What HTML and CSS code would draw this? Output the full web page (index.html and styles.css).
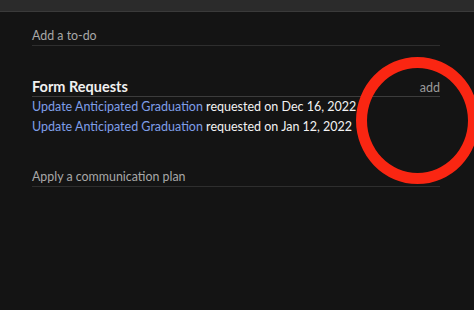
FILE: index.html
```html
<!DOCTYPE html>
<html lang="en">
<head>
    <meta charset="utf-8">
    <title>Form Requests</title>
    <link rel="stylesheet" href="styles.css">
</head>
<body>
    <div class="topbar"></div>

    <div class="content">
        <div class="section todo">
            <div class="section-line">Add a to-do</div>
        </div>

        <div class="section requests">
            <div class="section-head">
                <span class="title">Form Requests</span>
                <span class="add">add</span>
            </div>
            <div class="request">
                <a href="#" class="request-link">Update Anticipated Graduation</a> requested on Dec 16, 2022
            </div>
            <div class="request">
                <a href="#" class="request-link">Update Anticipated Graduation</a> requested on Jan 12, 2022
            </div>
        </div>

        <div class="section plan">
            <div class="section-line">Apply a communication plan</div>
        </div>
    </div>

    <div class="highlight"></div>
</body>
</html>
```

FILE: styles.css
```css
body {
    background: #141414;
    color: #eee;
    font-family: Lato, 'Open Sans', sans-serif;
    margin: 0;
    height: 310px;
    overflow: hidden;
    position: relative;
}
.topbar {
    height: 11px;
    background: #2b2b2b;
    border-bottom: 1px solid #3a3a3a;
}
.content {
    padding: 0 34px 0 32px;
}
.section-line {
    color: #a8a8a8;
    font-size: 12.4px;
    line-height: 16px;
    padding-bottom: 1px;
    border-bottom: 1px solid #2e2e2e;
}
.todo {
    padding-top: 16px;
}
.requests {
    padding-top: 32px;
}
.section-head {
    display: flex;
    justify-content: space-between;
    align-items: baseline;
    border-bottom: 1px solid #3c3c3c;
    padding-bottom: 1px;
}
.title {
    font-size: 14.5px;
    font-weight: bold;
    color: #f0f0f0;
}
.add {
    font-size: 12.5px;
    color: #9a9a9a;
}
.request {
    font-size: 12.5px;
    line-height: 20px;
    color: #f2f2f2;
}
.request:first-of-type {
    margin-top: 1px;
}
.request-link {
    color: #7f9ee8;
    text-decoration: none;
}
.plan {
    padding-top: 32px;
}
.highlight {
    position: absolute;
    left: 356px;
    top: 57px;
    width: 101px;
    height: 105px;
    border: 11px solid #fa2612;
    border-radius: 50%;
}
```
